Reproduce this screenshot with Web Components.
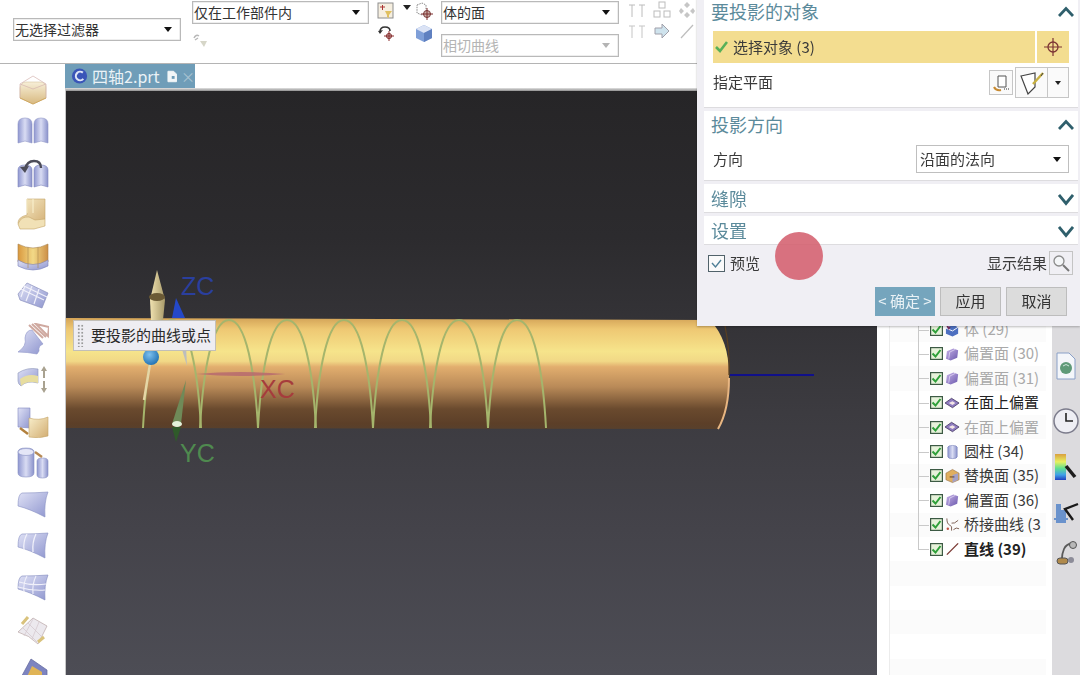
<!DOCTYPE html>
<html lang="zh">
<head>
<meta charset="utf-8">
<title>四轴2.prt</title>
<style>
  html, body { margin: 0; height: 100%; background: #fff; overflow: hidden; }
  body { font-family: "Noto Sans CJK SC", "Noto Sans", sans-serif; color: #333; }
</style>
</head>
<body>
<ug-app>
  <ug-toolbar slot="toolbar">
    <ug-select slot="filter">无选择过滤器</ug-select>
    <ug-select slot="scope">仅在工作部件内</ug-select>
    <ug-select slot="face">体的面</ug-select>
    <ug-select slot="curve" disabled>相切曲线</ug-select>
  </ug-toolbar>
  <ug-rail slot="rail"></ug-rail>
  <ug-viewport slot="view"></ug-viewport>
  <ug-tree slot="tree">
    <ug-tree-row icon="body" dim>体 (29)</ug-tree-row>
    <ug-tree-row icon="offset" dim>偏置面 (30)</ug-tree-row>
    <ug-tree-row icon="offset" dim>偏置面 (31)</ug-tree-row>
    <ug-tree-row icon="onface" dark>在面上偏置</ug-tree-row>
    <ug-tree-row icon="onface" dim>在面上偏置</ug-tree-row>
    <ug-tree-row icon="cyl">圆柱 (34)</ug-tree-row>
    <ug-tree-row icon="replace">替换面 (35)</ug-tree-row>
    <ug-tree-row icon="offset">偏置面 (36)</ug-tree-row>
    <ug-tree-row icon="bridge">桥接曲线 (3</ug-tree-row>
    <ug-tree-row icon="line" bold last>直线 (39)</ug-tree-row>
    <ug-tree-row empty></ug-tree-row>
    <ug-tree-row empty></ug-tree-row>
    <ug-tree-row empty></ug-tree-row>
    <ug-tree-row empty></ug-tree-row>
    <ug-tree-row empty></ug-tree-row>
  </ug-tree>
  <ug-dialog slot="dialog">
    <ug-section slot="sections" heading="要投影的对象" open first>
      <ug-pick-row></ug-pick-row>
    </ug-section>
    <ug-section slot="sections" heading="投影方向" open>
      <ug-dir-row></ug-dir-row>
    </ug-section>
    <ug-section slot="sections" heading="缝隙"></ug-section>
    <ug-section slot="sections" heading="设置"></ug-section>
  </ug-dialog>
</ug-app>

<script>
// shared gradients, each svg that needs them pulls this string in
const DEFS = `
  <defs>
    <linearGradient id="bl" x1="0" y1="0" x2="1" y2="1"><stop offset="0" stop-color="#dfe1f5"/><stop offset="1" stop-color="#8f96cf"/></linearGradient>
    <linearGradient id="blv" x1="0" y1="0" x2="1" y2="0"><stop offset="0" stop-color="#8f97d0"/><stop offset=".5" stop-color="#d9dcf3"/><stop offset="1" stop-color="#8a92cb"/></linearGradient>
    <linearGradient id="tn" x1="0" y1="0" x2="1" y2="1"><stop offset="0" stop-color="#f8eecb"/><stop offset="1" stop-color="#d2ad72"/></linearGradient>
    <linearGradient id="tnv" x1="0" y1="0" x2="0" y2="1"><stop offset="0" stop-color="#f7efd8"/><stop offset="1" stop-color="#d8b980"/></linearGradient>
    <linearGradient id="or" x1="0" y1="0" x2="1" y2="0"><stop offset="0" stop-color="#d9983e"/><stop offset=".5" stop-color="#f2d987"/><stop offset="1" stop-color="#cd8f45"/></linearGradient>
    <linearGradient id="pu" x1="0" y1="0" x2="1" y2="1"><stop offset="0" stop-color="#c9b4e8"/><stop offset="1" stop-color="#6a58ad"/></linearGradient>
  </defs>`;

const RAIL_ICONS = [
  // box in wireframe
  `<path d="M3 14q1-6 6-6h14q6 0 6 6v10l-13 6-13-6z" fill="url(#tnv)" stroke="#cdb88e" stroke-width=".5"/><path d="M3 10 16 2l13 8M3 10l13 5 13-5M3 10v14M29 10v14" fill="none" stroke="#d6b4b0" stroke-width=".7"/><path d="M3 24l13 6 13-6" fill="none" stroke="#d0a860" stroke-width="1"/>`,
  // two arches
  `<path d="M1 28V9q0-6 7-6t7 6v19l-7-2z" fill="url(#blv)" stroke="#8e95c6" stroke-width=".6"/><path d="M17 28V9q0-6 7-6t7 6v19l-7-2z" fill="url(#blv)" stroke="#8e95c6" stroke-width=".6"/>`,
  // arches with back arrow
  `<path d="M1 30V13q0-5 7-5t7 5v17l-7-2z" fill="url(#blv)" stroke="#7f87bd" stroke-width=".6"/><path d="M17 30V13q0-5 7-5t7 5v17l-7-2z" fill="url(#blv)" stroke="#7f87bd" stroke-width=".6"/><path d="M8 12q2-8 9-8t7 7" fill="none" stroke="#4c4c58" stroke-width="2.400"/><path d="M3 10l9-1-4 7z" fill="#4c4c58"/>`,
  // tan L block
  `<path d="M10 1h18v20l-5 3-4 3-15 2-3-4q0-6 9-8z" fill="url(#tn)" stroke="#c4a468" stroke-width=".6"/><path d="M16 1v14M10 1v14" stroke="#fbf3d0"/><path d="M1 26q3-8 11-7l6 3 10-1v7L17 31H3z" fill="#f1e1b6" stroke="#c4a468" stroke-width=".6"/>`,
  // patch, orange top and blue bottom
  `<path d="M1 4q15 8 30 0v18q-15 9-30 0z" fill="url(#or)" stroke="#a8814a" stroke-width=".6"/><path d="M1 20q15 9 30 0v6q-15 8-30 0z" fill="url(#bl)" stroke="#7c84bd" stroke-width=".6"/><path d="M11 7v21M21 7v21" stroke="#a9874f" stroke-width=".6"/>`,
  // grid surface
  `<path d="M1 13 10 2l21 10-6 15L3 19z" fill="url(#bl)" stroke="#8b90bf" stroke-width=".7"/><path d="M8 4.500 4 16M15 5l-6 15M22 8l-5 15M4 8l23 11M7 5l23 11" fill="none" stroke="#f1f1fa" stroke-width="1.200"/>`,
  // surface with stripes
  `<path d="M1 29q9-6 7-14 1-8 7-8l11 14q-5 2-4 7l-2 3q-10-2-19-2z" fill="url(#bl)" stroke="#8f95c7" stroke-width=".6"/><path d="M12 2 26 15M15 1l14 13M19 1l12 12 1-9z" fill="none" stroke="#cfa9a0" stroke-width="2"/>`,
  // flag with double arrow
  `<path d="M1 9q9-6 20-4v14q-11-3-17 3-3-2-3-5z" fill="url(#bl)" stroke="#8c95b8" stroke-width=".6"/><path d="M3 15q8-6 18-3v7q-11-3-17 3z" fill="#e7dd9f"/><path d="M27 2l3 5h-2v7h-2V7h-2zM27 29l3-5h-2v-7h-2v7h-2z" fill="#a9a290"/>`,
  // blue and tan sheet
  `<path d="M1 2h12v20l-12-1z" fill="url(#bl)" stroke="#7f86bf" stroke-width=".6"/><path d="M12 12q10 3 19-1v19q-9 3-19 1z" fill="url(#tn)" stroke="#c4a468" stroke-width=".6"/><path d="M3 22l8 6" stroke="#b2803c" stroke-width="2.400"/>`,
  // two cylinders
  `<path d="M1 5q0-4 8-4t8 4v21q0 4-8 4t-8-4z" fill="url(#blv)" stroke="#8890c2" stroke-width=".6"/><ellipse cx="9" cy="5" rx="8" ry="3.500" fill="#e4e6f7" stroke="#8890c2" stroke-width=".6"/><path d="M20 14q0-3 5.500-3t5.500 3v14q0 3-5.500 3T20 28z" fill="url(#blv)" stroke="#8890c2" stroke-width=".6"/><path d="M18 5l7 5" stroke="#b78a55" stroke-width="2.400"/>`,
  // plain surface
  `<path d="M1 17q0-12 4-13 13 0 26-1-4 10-3 25Q13 20 1 17z" fill="url(#bl)" stroke="#8890c2" stroke-width=".6"/>`,
  // surface in three strips
  `<path d="M1 17q0-12 4-13 13 0 26-1-4 10-3 25Q13 20 1 17z" fill="url(#bl)" stroke="#8890c2" stroke-width=".6"/><path d="M10 4q-4 7-3 16M19 4q-4 8-3 18" fill="none" stroke="#f1f1fa" stroke-width="1.300"/>`,
  // surface as a grid
  `<path d="M1 17q0-12 4-13 13 0 26-1-4 10-3 25Q13 20 1 17z" fill="url(#bl)" stroke="#7f88bd" stroke-width=".6"/><path d="M10 4q-4 7-3 16M19 4q-4 8-3 18M2 10q13 4 27 2M1 15q13 4 27 3" fill="none" stroke="#f1f1fa" stroke-width="1.100"/>`,
  // mesh with yellow arrows
  `<path d="M1 19 16 5l14 8-9 18q-9-9-20-12z" fill="#ece9ee" stroke="#b9a6a6" stroke-width=".7"/><path d="M6 15l14 14M11 10l14 14M16 6l-9 17M22 9l-7 17" stroke="#d2c6cc" stroke-width=".7"/><path d="M5 11l6-7M27 24l-6 5" stroke="#d9c27c" stroke-width="3"/>`,
  // last one, cut off by the window
  `<path d="M1 28 14 4l16 11v13z" fill="#7d84c0" stroke="#5e649a" stroke-width=".7"/><path d="M9 24l6-13 10 6v8z" fill="#e0b456"/>`
];

const TREE_ICONS = {
  body: `<path d="M1 6l7-4 6 3v7l-6 3-7-3z" fill="#4d6fc0"/><path d="M1 6l7 3 6-4" fill="none" stroke="#fff"/><path d="M1 3l5 2-2 3z" fill="#7a2d5d"/>`,
  offset: `<path d="M2 5l7-3 5 2-1 8-7 3-5-2z" fill="url(#pu)"/><path d="M5 6l6-3M5 6l-1 7" stroke="#e3daf5" stroke-width=".8"/>`,
  onface: `<path d="M0 8l7-5 8 5-7 5z" fill="#8e7bbf" stroke="#3f3358" stroke-width=".8"/><path d="M4 8l4-2 3 2-3 2z" fill="#f3e6e6"/>`,
  cyl: `<path d="M3 3q0-2 5-2t5 2v10q0 2-5 2t-5-2z" fill="url(#blv)" stroke="#6f78b5" stroke-width=".6"/>`,
  replace: `<path d="M1 5l7-4 7 4v7l-7 3-7-3z" fill="#dfae5f" stroke="#90683a" stroke-width=".6"/><path d="M8 7l6-2v7l-6 3z" fill="#a2a0c8"/><path d="M5 9h5" stroke="#5c3c22"/>`,
  bridge: `<path d="M2 1q0 6 3 7t2 6M14 3q-4 4-7 3M9 13q3-3 6-1" fill="none" stroke="#7a5c50" stroke-width="1"/><circle cx="3" cy="12" r="1.300" fill="#c05040"/>`,
  line: `<path d="M2 14 14 2" stroke="#7c3a36" stroke-width="1.500"/>`
};

function define(name, css, html, init) {
  customElements.define(name, class extends HTMLElement {
    connectedCallback() {
      if (this.shadowRoot) return;
      this.attachShadow({ mode: 'open' });
      const body = typeof html === 'function' ? html(this) : html;
      this.shadowRoot.innerHTML = `<style>${css}</style>${body}`;
      if (init) init(this);
    }
  });
}

define('ug-select', `
  :host { display: block; box-sizing: border-box; height: 23px; background: #fff; border: 1px solid #b9b9b9; box-shadow: inset 0 0 0 .5px #ddd; font-size: 14px; color: #333; }
  :host([disabled]) { color: #b4b4b4; }
  .box { display: flex; align-items: center; justify-content: space-between; height: 100%; padding: 0 8px 0 1px; line-height: 1; white-space: nowrap; }
  .box span { padding-bottom: 2px; }
  i { width: 0; height: 0; border: 4.500px solid transparent; border-top: 5px solid #111; border-bottom: 0; }
  :host([disabled]) i { border-top-color: #b4b4b4; }
`, `<div class="box"><span><slot></slot></span><i></i></div>`);

define('ug-toolbar', `
  :host { display: flex; box-sizing: border-box; height: 64px; padding-left: 13px; border-bottom: 1px solid #b4b4b4; background: #fff; overflow: hidden; }
  svg { display: block; }
  .filter { width: 168px; margin: 18px 11px 0 0; }
  .col2 { width: 177px; margin: 1px 8px 0 0; display: flex; flex-direction: column; gap: 8px; }
  .tools { width: 55px; margin-right: 9px; padding-top: 0; display: grid; grid-template-columns: 22px 16px 17px; grid-auto-rows: 22px; align-items: center; }
  .caret { width: 0; height: 0; border: 4px solid transparent; border-top: 5px solid #222; border-bottom: 0; margin: 0 0 8px 0; justify-self: center; }
  .col4 { width: 178px; margin: 1px 9px 0 0; display: flex; flex-direction: column; gap: 10px; }
  .grey { display: grid; grid-template-columns: repeat(3, 25px); grid-auto-rows: 21px; padding-top: 1px; opacity: .55; }
`, `
  <div class="filter"><slot name="filter"></slot></div>
  <div class="col2">
    <slot name="scope"></slot>
    <svg width="16" height="16" viewBox="0 0 16 16"><path d="M2 6q2-4 5-2M3 8l3-2" fill="none" stroke="#b8b8b8" stroke-width="1.500"/><path d="M8 9h7l-3 6z" fill="#d6d6c8"/></svg>
  </div>
  <div class="tools">
    <svg width="18" height="18" viewBox="0 0 18 18">${DEFS}<rect x="1" y="1" width="15" height="15" fill="#f6efe0" stroke="#8e8e8e"/><path d="M3 5h5M5.500 3v5" stroke="#a33"/><path d="M8 9h7l-3 4v3l-2-1v-2z" fill="#e0c060"/></svg>
    <span class="caret"></span>
    <svg width="18" height="18" viewBox="0 0 18 18"><path d="M2 3l5-2 4 2v8l-4 2-5-2z" fill="#fff" stroke="#888" stroke-dasharray="1.500 1"/><circle cx="12" cy="12" r="3.500" fill="#c9b0a8" stroke="#7a3c3c"/><path d="M12 6v12M6 12h12" stroke="#7a2c2c"/></svg>
    <svg width="18" height="18" viewBox="0 0 18 18"><path d="M3 8q0-5 5-5t5 4" fill="none" stroke="#333" stroke-width="1.600"/><path d="M1 7l5-1-3 4z" fill="#333"/><circle cx="12" cy="12" r="2.600" fill="#c9a8a8" stroke="#8a3c3c"/><path d="M12 7v10M7 12h10" stroke="#8a2c2c"/></svg>
    <span></span>
    <svg width="18" height="18" viewBox="0 0 18 18"><path d="M1 5l8-4 8 4v9l-8 4-8-4z" fill="#7f9fd8"/><path d="M1 5l8 4 8-4-8-4z" fill="#dbe3f5"/><path d="M9 9v9l8-4V5z" fill="#5f80c0"/></svg>
  </div>
  <div class="col4"><slot name="face"></slot><slot name="curve"></slot></div>
  <div class="grey">
    <svg width="18" height="18" viewBox="0 0 18 18"><path d="M1 4h6M11 4h6M4 4v12M14 4v12" stroke="#888" fill="none"/></svg>
    <svg width="18" height="18" viewBox="0 0 18 18"><rect x="6" y="1" width="6" height="6" fill="none" stroke="#888"/><rect x="1" y="10" width="6" height="6" fill="none" stroke="#888"/><rect x="11" y="10" width="6" height="6" fill="none" stroke="#888"/></svg>
    <svg width="18" height="18" viewBox="0 0 18 18"><path d="M9 1l3 3-3 3-3-3zM3 7l3 3-3 3-2-3zM15 7l2 3-2 3-3-3zM9 11l3 3-3 3-3-3z" fill="#999"/></svg>
    <svg width="18" height="18" viewBox="0 0 18 18"><path d="M1 4h6M11 4h6M4 4v12M14 4v12" stroke="#999" fill="none"/></svg>
    <svg width="18" height="18" viewBox="0 0 18 18"><path d="M2 6h7V2l7 7-7 7v-4H2z" fill="#a8cde0" stroke="#556"/></svg>
    <svg width="18" height="18" viewBox="0 0 18 18"><path d="M3 16 15 3" stroke="#888" stroke-width="1.200"/></svg>
  </div>
`, null);

define('ug-rail', `
  :host { display: block; height: 611px; overflow: hidden; background: #fff; padding-top: 5px; box-sizing: border-box; }
  .slot { height: 41.500px; display: flex; align-items: center; justify-content: center; }
  svg { display: block; }
`, () => RAIL_ICONS.map(p =>
  `<div class="slot"><svg width="32" height="32" viewBox="0 0 32 32">${DEFS}${p}</svg></div>`).join(''));

// viewBox uses page coordinates, easier to read against the screenshot
function helix() {
  const tops = [172, 229, 287, 344, 402, 459, 517];
  return tops.map(x =>
    `<path d="M${x - 29} 428C${x - 26} 372 ${x - 17} 320 ${x} 320C${x + 17} 320 ${x + 26} 372 ${x + 29} 428"/>`).join('');
}

define('ug-viewport', `
  :host { display: flex; flex-direction: column; height: 611px; background: #fff; border-left: 1px solid #c8c8c8; box-sizing: border-box; font-family: "Liberation Sans", "Noto Sans CJK SC", sans-serif; position: relative; }
  .strip { height: 24px; flex: none; display: flex; }
  .tab { width: 130px; margin-left: -1px; background: #6f9db8; color: #eaf2f6; font: 16px/1 "Noto Sans CJK SC", sans-serif; display: flex; align-items: center; gap: 4px; padding-left: 6px; box-sizing: border-box; white-space: nowrap; }
  .tab > span:first-of-type { margin-right: 3px; }
  .tab .close { color: #a9c3d2; font-size: 14px; }
  .bar { height: 3px; flex: none; background: linear-gradient(#e2e2e2, #8f8f8f); }
  .scene { flex: 1; min-height: 0; background: linear-gradient(#262527 0, #2c2b2e 25%, #3c3b40 55%, #44434a 75%, #4d4d55 100%); position: relative; overflow: hidden; }
  svg.canvas { display: block; width: 100%; height: 100%; }
  .tip { position: absolute; left: 7px; top: 229px; width: 143px; height: 31px; box-sizing: border-box; background: #eeedf2; border: 1px solid #c2bfb8; font: 15px/28px "Noto Sans CJK SC", sans-serif; color: #2a2a2a; padding-left: 17px; white-space: nowrap; }
  .tip::before { content: ""; position: absolute; left: 3px; top: 3px; bottom: 3px; width: 7px; background-image: radial-gradient(#9a9a9a 35%, transparent 40%); background-size: 3.500px 3.500px; }
`, `
  <div class="strip">
    <div class="tab">
      <svg width="18" height="18" viewBox="0 0 18 18"><circle cx="9" cy="9" r="8" fill="#3a55b8"/><path d="M12.500 5.500A4.500 4.500 0 1 0 13 12" fill="none" stroke="#dfe6f7" stroke-width="2.200"/></svg>
      <span>四轴2.prt</span>
      <svg width="11" height="13" viewBox="0 0 11 13"><path d="M1 1h6l3 3v8H1z" fill="#f2f6f8" stroke="#f2f6f8"/><path d="M5 6h3v3H5z" fill="#6f9db8"/></svg>
      <span class="close">×</span>
    </div>
  </div>
  <div class="bar"></div>
  <div class="scene">
    <svg class="canvas" viewBox="66 91 811 584" preserveAspectRatio="none">
      <defs>
        <linearGradient id="cyl" x1="0" y1="0" x2="0" y2="1">
          <stop offset="0" stop-color="#d4a458"/><stop offset=".1" stop-color="#eec873"/>
          <stop offset=".3" stop-color="#f6e48b"/><stop offset=".39" stop-color="#f1d886"/>
          <stop offset=".44" stop-color="#e2ae6e"/><stop offset=".62" stop-color="#b98a58"/>
          <stop offset=".82" stop-color="#6a4a2e"/><stop offset=".95" stop-color="#5c3f28"/>
          <stop offset="1" stop-color="#58402c"/>
        </linearGradient>
        <linearGradient id="cone" x1="0" y1="0" x2="1" y2="0">
          <stop offset="0" stop-color="#f0e2b0"/><stop offset="1" stop-color="#a89a6a"/>
        </linearGradient>
        <radialGradient id="ball" cx=".4" cy=".35" r=".7"><stop offset="0" stop-color="#7cc0ee"/><stop offset="1" stop-color="#1f6fb0"/></radialGradient>
      </defs>
      <path d="M730 375H814" stroke="#10108a" stroke-width="2"/>
      <path d="M66 318 710 320Q729 340 729 375 729 410 718 429L66 428z" fill="url(#cyl)"/>
      <path d="M725 326Q730 350 729 375" fill="none" stroke="#5a4020" stroke-width="1.200"/>
      <path d="M729 378Q729 410 718 429" fill="none" stroke="#e8b682" stroke-width="2"/>
      <g fill="none" stroke="#a5b56c" stroke-width="2">${helix()}</g>
      <path d="M196 374Q240 370 285 374 240 378 196 374z" fill="#b5666f" opacity=".8"/>
      <path d="M157 270 150 300 151 320H163L165 300z" fill="url(#cone)"/>
      <ellipse cx="157" cy="297" rx="8" ry="4" fill="#6b5a35"/>
      <path d="M176 298 172 318H185z" fill="#2448c8"/>
      <path d="M150 364 144 400" stroke="#e6d6a6" stroke-width="2.500"/>
      <circle cx="151" cy="357" r="8" fill="url(#ball)"/>
      <path d="M181 346 186 346 187 366z" fill="#bdbdbd"/>
      <path d="M186 380 172 424H181z" fill="#6f8a58"/>
      <ellipse cx="177" cy="424" rx="5" ry="3" fill="#e4f2da"/>
      <path d="M172 427 176 442 181 427z" fill="#2f5a2a"/>
      <text x="181" y="295" font-size="25" fill="#2a3f9e">ZC</text>
      <text x="260" y="398" font-size="25" fill="#a63c3c">XC</text>
      <text x="180" y="462" font-size="25" fill="#4f8a4f">YC</text>
    </svg>
    <div class="tip">要投影的曲线或点</div>
  </div>
`, null);

define('ug-tree-row', `
  :host { display: block; height: 24.400px; overflow: hidden; font-size: 15px; color: #3a3a3a; }
  :host(:nth-child(odd)) { background: #fbfbfb; }
  :host([dim]) { color: #a9a9a9; }
  :host([dark]) { color: #222; }
  :host([bold]) { font-weight: 700; color: #222; }
  .row { display: flex; align-items: center; height: 100%; padding-left: 28px; white-space: nowrap; line-height: 1; }
  .row > span:last-child { padding-bottom: 2px; }
  .guide { width: 12px; height: 100%; flex: none; position: relative; }
  .guide::before { content: ""; position: absolute; left: 0; top: 0; bottom: 0; border-left: 1px solid #c9c9c9; }
  :host([last]) .guide::before { bottom: 50%; }
  .guide::after { content: ""; position: absolute; left: 0; width: 11px; top: 50%; border-top: 1px solid #c9c9c9; }
  svg { flex: none; display: block; }
  .ic { margin: 0 4px 0 2px; }
`, el => {
  if (el.hasAttribute('empty')) return '';
  const ic = TREE_ICONS[el.getAttribute('icon')] || '';
  return `<div class="row"><span class="guide"></span>
    <svg width="13" height="13" viewBox="0 0 13 13"><rect x=".6" y=".6" width="11.800" height="11.800" fill="#e6f2da" stroke="#3c5a44" stroke-width="1.200"/><path d="M2.500 6.500l3 3 5-6.500" fill="none" stroke="#2fa03a" stroke-width="2"/></svg>
    <svg class="ic" width="15" height="16" viewBox="0 0 16 16">${DEFS}${ic}</svg>
    <span><slot></slot></span></div>`;
});

define('ug-tree', `
  :host { display: flex; height: 611px; background: #fff; padding-left: 12px; box-sizing: border-box; }
  .list { width: 157px; flex: none; padding-top: 253.400px; border-left: 1px solid #ececec; box-sizing: border-box; overflow: hidden; }
  .side { width: 28px; margin-left: 6px; flex: none; background: #dcdbde; display: flex; flex-direction: column; align-items: center; padding-top: 288px; box-sizing: border-box; }
  .side svg { display: block; flex: none; }
`, `
  <div class="list"><slot></slot></div>
  <div class="side">
    <svg width="24" height="28" viewBox="0 0 24 28" style="margin-bottom:28px"><path d="M3 1h12l6 6v20H3z" fill="#f4f6fa" stroke="#8aa0c8"/><circle cx="12" cy="16" r="6" fill="#5f9a78"/><path d="M9 14q3-3 6 0" stroke="#cfe6dc" fill="none"/></svg>
    <svg width="26" height="26" viewBox="0 0 26 26" style="margin-bottom:19px"><circle cx="13" cy="13" r="12" fill="#eeeef4" stroke="#7c7c8c" stroke-width="1.500"/><path d="M13 5v8h7" fill="none" stroke="#222" stroke-width="1.600"/></svg>
    <svg width="24" height="28" viewBox="0 0 24 28" style="margin-bottom:18px"><defs><linearGradient id="rb" x1="0" y1="0" x2="0" y2="1"><stop offset="0" stop-color="#d9a040"/><stop offset=".3" stop-color="#e8f060"/><stop offset=".55" stop-color="#60e090"/><stop offset=".8" stop-color="#40a0e8"/><stop offset="1" stop-color="#2040c0"/></linearGradient></defs><rect x="1" y="1" width="11" height="26" fill="url(#rb)"/><path d="M12 13l9 11" stroke="#1e1e1e" stroke-width="3.500"/></svg>
    <svg width="26" height="26" viewBox="0 0 26 26" style="margin-bottom:15px"><path d="M3 24V5h5v6h5v13z" fill="#6a92cc"/><path d="M1 20h14" stroke="#6a92cc" stroke-width="2"/><path d="M25 5 12 10l8 11" fill="none" stroke="#1a1a1a" stroke-width="2.400"/></svg>
    <svg width="24" height="26" viewBox="0 0 24 26"><path d="M19 3q-7 1-9 6t-2 9" fill="none" stroke="#5a5a5a" stroke-width="1.800"/><circle cx="19" cy="5" r="3.500" fill="#b8b8b8" stroke="#555"/><rect x="3" y="18" width="11" height="6" rx="3" fill="#b08a4c" stroke="#555"/><circle cx="17" cy="20" r="3" fill="#8c8c98"/></svg>
  </div>
`, null);

define('ug-section', `
  :host { display: block; background: #fff; border-bottom: 1px solid #dddcdf; box-sizing: border-box; }
  :host([first]) { height: 110px; }
  :host([open]:not([first])) { height: 70px; }
  :host(:not([open])) { height: 29px; overflow: hidden; }
  .head { display: flex; align-items: center; justify-content: space-between; height: 28px; padding: 0 4px 0 7px; font-size: 18px; color: #5b8a9b; line-height: 1; }
  .head span { padding-bottom: 2px; }
  :host(:not([open])) .head { padding-top: 1px; }
  svg { display: block; }
  .body { padding: 0 9px; }
`, el => {
  const up = el.hasAttribute('open');
  const d = up ? 'M1 11 8 3.500 15 11' : 'M1 3 8 11.500 15 3';
  return `<div class="head"><span>${el.getAttribute('heading')}</span>
    <svg width="16" height="14" viewBox="0 0 16 14"><path d="${d}" fill="none" stroke="#2f5f6c" stroke-width="2.800"/></svg></div>
    <div class="body"><slot></slot></div>`;
});

define('ug-pick-row', `
  :host { display: block; font-size: 15px; color: #3a3a3a; padding-top: 5px; line-height: 1; }
  .pick { display: flex; gap: 2px; height: 32px; }
  .main { flex: 1; background: #f3dd90; display: flex; align-items: center; gap: 5px; padding-left: 2px; }
  .main span { padding-bottom: 2px; }
  .btn { width: 32px; background: #f3dd90; display: flex; align-items: center; justify-content: center; }
  .plane { display: flex; align-items: center; height: 35px; margin-top: 2px; }
  .plane span { flex: 1; padding-bottom: 2px; }
  .ib { box-sizing: border-box; border: 1px solid #c6c6c6; background: #fafafa; display: flex; align-items: center; justify-content: center; }
  .drop { width: 22px; height: 31px; }
  .drop i { width: 0; height: 0; border: 3.500px solid transparent; border-top: 4px solid #222; border-bottom: 0; }
  svg { display: block; }
`, `
  <div class="pick">
    <div class="main">
      <svg width="13" height="12" viewBox="0 0 13 12"><path d="M1 6l4 4 7-9" fill="none" stroke="#58b058" stroke-width="2.600"/></svg>
      <span>选择对象 (3)</span>
    </div>
    <div class="btn"><svg width="20" height="20" viewBox="0 0 20 20"><circle cx="10" cy="10" r="5" fill="none" stroke="#7c3434" stroke-width="1.300"/><path d="M10 1v18M1 10h18" stroke="#7c3434" stroke-width="1.200"/></svg></div>
  </div>
  <div class="plane">
    <span>指定平面</span>
    <div class="ib" style="width:24px;height:25px;margin-right:2px"><svg width="18" height="18" viewBox="0 0 18 18"><path d="M6 2h8v11H6z" fill="#fff" stroke="#555"/><path d="M2 13q2 4 7 3" fill="none" stroke="#c88a30" stroke-width="2"/><path d="M12 15h1M14 15h1M16 15h1" stroke="#333"/></svg></div>
    <div class="ib" style="width:32px;height:31px;border-right:0"><svg width="26" height="24" viewBox="0 0 26 24"><path d="M2 5 16 2v14l-7 7z" fill="#fff" stroke="#444" stroke-width="1.200"/><path d="M14 13 24 2" stroke="#c7b040" stroke-width="2.400"/><path d="M22 5l2-3" stroke="#444" stroke-width="1"/></svg></div>
    <div class="ib drop"><i></i></div>
  </div>
`, null);

define('ug-dir-row', `
  :host { display: flex; align-items: center; justify-content: space-between; margin-top: 6px; font-size: 15px; color: #3a3a3a; line-height: 1; }
  :host > span { padding-bottom: 2px; }
  .box { width: 153px; height: 28px; box-sizing: border-box; border: 1px solid #bfbfbf; display: flex; align-items: center; justify-content: space-between; padding: 0 7px 0 3px; background: #fff; }
  .box span { padding-bottom: 2px; }
  i { width: 0; height: 0; border: 4.500px solid transparent; border-top: 5px solid #111; border-bottom: 0; }
`, `<span>方向</span><div class="box"><span>沿面的法向</span><i></i></div>`);

define('ug-dialog', `
  :host { display: block; width: 383px; height: 328px; box-sizing: border-box; background: #f0eff4; padding: 0 2px 0 7px; box-shadow: 0 1px 2px rgba(0,0,0,.25); font-size: 15px; color: #3a3a3a; }
  .stack { display: flex; flex-direction: column; gap: 3px; }
  .opts { display: flex; align-items: center; justify-content: space-between; padding: 6px 5px 0 4px; line-height: 1; }
  .opts > div { display: flex; align-items: center; }
  .opts b { font-weight: 400; padding-bottom: 2px; }
  .chk { width: 17px; height: 17px; box-sizing: border-box; border: 1px solid #51626a; background: #fafafa; margin-right: 5px; }
  .chk svg { display: block; }
  .find { width: 24px; height: 24px; box-sizing: border-box; border: 1px solid #c4c4c4; margin-left: 2px; display: flex; align-items: center; justify-content: center; }
  .acts { display: flex; justify-content: flex-end; gap: 5px; margin-top: 12px; padding-right: 11px; }
  .acts span { width: 61px; height: 29px; box-sizing: border-box; border: 1px solid #bdbdbd; background: #dcdcdc; display: flex; align-items: center; justify-content: center; color: #333; padding-bottom: 2px; }
  .acts .ok { width: 60px; background: #75a5bd; border: 0; color: #eaf2f6; white-space: nowrap; }
`, `
  <div class="stack"><slot name="sections"></slot></div>
  <div class="opts">
    <div><div class="chk"><svg width="15" height="15" viewBox="0 0 15 15"><path d="M3 7l3.500 4L12 4" fill="none" stroke="#4f7f96" stroke-width="1.400"/></svg></div><b>预览</b></div>
    <div><b>显示结果</b><div class="find"><svg width="18" height="18" viewBox="0 0 18 18"><circle cx="7" cy="7" r="5" fill="#f4f6f8" stroke="#8a8a8a" stroke-width="1.300"/><path d="M11 11l6 6" stroke="#777" stroke-width="2"/></svg></div></div>
  </div>
  <div class="acts"><span class="ok">&lt; 确定 &gt;</span><span>应用</span><span>取消</span></div>
`, null);

define('ug-app', `
  :host { display: block; position: relative; width: 1080px; height: 675px; overflow: hidden; filter: blur(.4px); }
  .main { display: grid; grid-template-columns: 65px 812px 203px; height: 611px; }
  .dlg { position: absolute; left: 697px; top: -2px; }
  .touch { position: absolute; left: 775px; top: 232px; width: 48px; height: 48px; border-radius: 50%; background: rgba(212, 96, 110, .88); }
`, `
  <slot name="toolbar"></slot>
  <div class="main"><slot name="rail"></slot><slot name="view"></slot><slot name="tree"></slot></div>
  <div class="dlg"><slot name="dialog"></slot></div>
  <div class="touch"></div>
`, null);
</script>
</body>
</html>
